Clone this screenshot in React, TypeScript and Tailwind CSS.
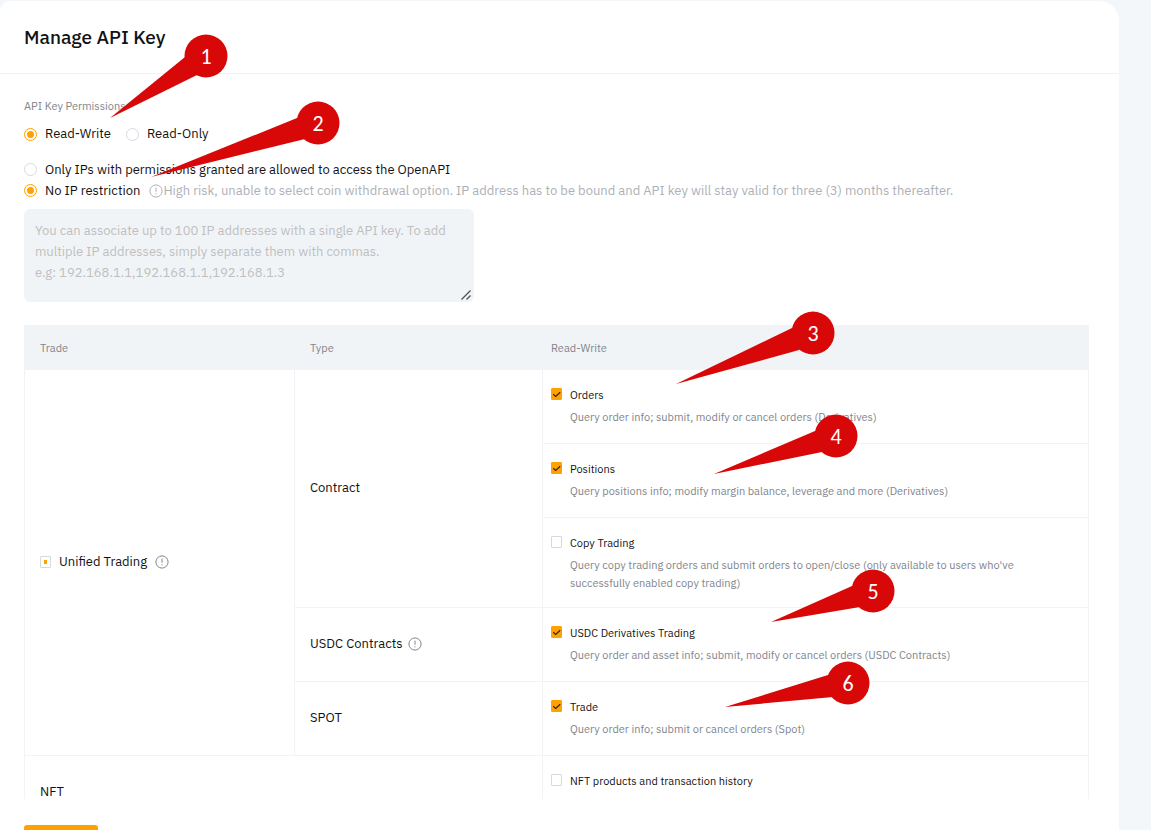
import { useState } from "react";
import type { ReactNode } from "react";

interface Permission {
  id: string;
  title: string;
  description?: string;
}

interface Pin {
  label: string;
  cx: number;
  cy: number;
  tail: string;
}

const permissions: Record<string, Permission> = {
  orders: {
    id: "orders",
    title: "Orders",
    description: "Query order info; submit, modify or cancel orders (Derivatives)",
  },
  positions: {
    id: "positions",
    title: "Positions",
    description: "Query positions info; modify margin balance, leverage and more (Derivatives)",
  },
  copyTrading: {
    id: "copyTrading",
    title: "Copy Trading",
    description:
      "Query copy trading orders and submit orders to open/close (only available to users who've successfully enabled copy trading)",
  },
  usdc: {
    id: "usdc",
    title: "USDC Derivatives Trading",
    description: "Query order and asset info; submit, modify or cancel orders (USDC Contracts)",
  },
  spot: {
    id: "spot",
    title: "Trade",
    description: "Query order info; submit or cancel orders (Spot)",
  },
  nft: { id: "nft", title: "NFT products and transaction history" },
};

const pins: Pin[] = [
  { label: "1", cx: 206, cy: 56, tail: "110,118 185,57 206,56 197,75" },
  { label: "2", cx: 318, cy: 123, tail: "151,177 297,118 318,123 305,139" },
  { label: "3", cx: 813, cy: 333, tail: "676,384 792,328 813,333 799,350" },
  { label: "4", cx: 836, cy: 436, tail: "714,474 815,431 836,436 822,452" },
  { label: "5", cx: 873, cy: 591, tail: "771,622 852,586 873,591 860,607" },
  { label: "6", cx: 848, cy: 683, tail: "725,707 828,675 848,683 833,697" },
];

function InfoIcon({ className }: { className: string }) {
  return (
    <svg viewBox="0 0 14 14" className={`h-[14px] w-[14px] shrink-0 ${className}`} fill="none" stroke="currentColor">
      <circle cx="7" cy="7" r="6.1" />
      <path d="M7 3.6v4.2M7 9.2v1.1" />
    </svg>
  );
}

function Radio({
  name,
  label,
  checked,
  onChange,
}: {
  name: string;
  label: string;
  checked: boolean;
  onChange: () => void;
}) {
  return (
    <label className="flex cursor-pointer items-center gap-2">
      <input
        type="radio"
        name={name}
        checked={checked}
        onChange={onChange}
        className="h-[13px] w-[13px] appearance-none rounded-full border border-[#d5dae0] bg-white checked:border-[#ffa200] checked:bg-[radial-gradient(circle,#ffa200_3px,white_4px)]"
      />
      {label}
    </label>
  );
}

function Checkbox({
  id,
  checked,
  onChange,
  indeterminate,
}: {
  id: string;
  checked: boolean;
  onChange: () => void;
  indeterminate?: boolean;
}) {
  return (
    <span className="relative block h-3 w-[11px] shrink-0">
      <input
        id={id}
        type="checkbox"
        checked={checked}
        onChange={onChange}
        className="block h-3 w-[11px] appearance-none rounded-[1px] border border-[#d5dae0] bg-white checked:border-[#ffa200] checked:bg-[#ffa200]"
      />
      {(checked || indeterminate) && (
        <svg viewBox="0 0 11 12" className="pointer-events-none absolute inset-0 h-3 w-[11px]" fill="none">
          {indeterminate ? (
            <rect x="4" y="4" width="3" height="4" fill="#ffa200" />
          ) : (
            <path d="M2.3 6.2l2.4 2.3 4.5-4.2" stroke="#2b2412" strokeWidth="1.2" />
          )}
        </svg>
      )}
    </span>
  );
}

function Cell({ children, ...rest }: { children: ReactNode; rowSpan?: number; colSpan?: number }) {
  return (
    <td {...rest} className="border-b border-l border-[#f1f3f6] px-[15px] pb-[2px] align-middle">
      {children}
    </td>
  );
}

export default function App() {
  const [access, setAccess] = useState("write");
  const [ipMode, setIpMode] = useState("none");
  const [unified, setUnified] = useState(false);
  const [selected, setSelected] = useState<string[]>(["orders", "positions", "usdc", "spot"]);

  const toggle = (id: string) => {
    setSelected(selected.includes(id) ? selected.filter((s) => s !== id) : [...selected, id]);
  };

  const permissionCell = (p: Permission) => (
    <td className="h-[74px] border-r border-b border-l border-[#f1f3f6] pt-4 pr-10 pb-[15px] pl-2 align-top">
      <div className="flex gap-2">
        <div className="pt-[2px]">
          <Checkbox id={p.id} checked={selected.includes(p.id)} onChange={() => toggle(p.id)} />
        </div>
        <div className="text-[11px] leading-[18px]">
          <label htmlFor={p.id} className="block cursor-pointer text-[#121214]">
            {p.title}
          </label>
          {p.description && <p className="mt-1 text-[#81858c]">{p.description}</p>}
        </div>
      </div>
    </td>
  );

  return (
    <div className="relative h-screen overflow-hidden bg-[#f3f7fa] pt-px pr-8 font-['IBM_Plex_Sans',Roboto,sans-serif] text-[13px] text-[#121214]">
      <main className="min-h-screen rounded-tl-[10px] rounded-tr-[20px] bg-white">
        <header className="border-b border-[#f1f2f4] px-6 py-[22px]">
          <h1 className="text-[19px] leading-7 font-medium">Manage API Key</h1>
        </header>

        <div className="pt-6 pr-[30px] pl-6">
          <p className="text-[11px] leading-4 text-[#81858c]">API Key Permissions</p>
          <div className="mt-[10px] flex gap-[15px] leading-5">
            <Radio name="access" label="Read-Write" checked={access === "write"} onChange={() => setAccess("write")} />
            <Radio name="access" label="Read-Only" checked={access === "read"} onChange={() => setAccess("read")} />
          </div>

          <div className="mt-[15px] leading-[21px]">
            <Radio
              name="ip"
              label="Only IPs with permissions granted are allowed to access the OpenAPI"
              checked={ipMode === "bound"}
              onChange={() => setIpMode("bound")}
            />
            <div className="flex items-center gap-[9px]">
              <Radio name="ip" label="No IP restriction" checked={ipMode === "none"} onChange={() => setIpMode("none")} />
              <p className="flex items-center text-[#adb1b8]">
                <InfoIcon className="text-[#adb1b8]" />
                High risk, unable to select coin withdrawal option. IP address has to be bound and API key will stay valid
                for three (3) months thereafter.
              </p>
            </div>
          </div>

          <div className="relative mt-2 w-[450px]">
            <textarea
              aria-label="IP addresses"
              className="block h-[93px] w-full resize-none rounded-md bg-[#f1f4f7] px-[11px] py-[11px] leading-[21px] outline-none placeholder:text-[#bfbfbf]"
              placeholder={
                "You can associate up to 100 IP addresses with a single API key. To add multiple IP addresses, simply separate them with commas.\ne.g: 192.168.1.1,192.168.1.1,192.168.1.3"
              }
            />
            <svg
              viewBox="0 0 10 10"
              className="pointer-events-none absolute right-[3px] bottom-[2px] h-[10px] w-[10px]"
              stroke="#4d4f54"
              strokeWidth="1.3"
            >
              <path d="M.5 9.5l9-9M5.5 9.5l4-4" />
            </svg>
          </div>

          <div className="mt-[23px] max-h-[474px] overflow-hidden">
            <table className="w-full table-fixed border-separate border-spacing-0 text-left">
              <colgroup>
                <col className="w-[270px]" />
                <col className="w-[248px]" />
                <col />
              </colgroup>
              <thead>
                <tr className="h-[45px] bg-[#f1f4f7] text-[11px] text-[#81858c]">
                  <th className="px-4 pt-[2px] font-normal">Trade</th>
                  <th className="px-4 pt-[2px] font-normal">Type</th>
                  <th className="px-[9px] pt-[2px] font-normal">Read-Write</th>
                </tr>
              </thead>
              <tbody>
                <tr>
                  <Cell rowSpan={5}>
                    <div className="flex items-center gap-2">
                      <Checkbox
                        id="unified"
                        checked={unified}
                        indeterminate={!unified}
                        onChange={() => setUnified(!unified)}
                      />
                      <label htmlFor="unified">Unified Trading</label>
                      <InfoIcon className="text-[#81858c]" />
                    </div>
                  </Cell>
                  <Cell rowSpan={3}>Contract</Cell>
                  {permissionCell(permissions.orders)}
                </tr>
                <tr>{permissionCell(permissions.positions)}</tr>
                <tr>{permissionCell(permissions.copyTrading)}</tr>
                <tr>
                  <Cell>
                    <div className="flex items-center gap-[5px]">
                      USDC Contracts
                      <InfoIcon className="text-[#81858c]" />
                    </div>
                  </Cell>
                  {permissionCell(permissions.usdc)}
                </tr>
                <tr>
                  <Cell>SPOT</Cell>
                  {permissionCell(permissions.spot)}
                </tr>
                <tr>
                  <Cell colSpan={2}>NFT</Cell>
                  {permissionCell(permissions.nft)}
                </tr>
              </tbody>
            </table>
          </div>

          <button type="button" aria-label="Submit" className="mt-[26px] block h-9 w-[74px] rounded-[3px] bg-[#ffa200]" />
        </div>
      </main>

      {/* Numbered step markers drawn over the page */}
      <svg className="pointer-events-none absolute inset-0 h-full w-full" fill="#d80808">
        {pins.map((pin) => (
          <g key={pin.label}>
            <polygon points={pin.tail} />
            <circle cx={pin.cx} cy={pin.cy} r="21.5" />
            <text x={pin.cx} y={pin.cy + 8} textAnchor="middle" fill="white" className="font-[Carlito,Lato,sans-serif] text-[22px]">
              {pin.label}
            </text>
          </g>
        ))}
      </svg>
    </div>
  );
}
